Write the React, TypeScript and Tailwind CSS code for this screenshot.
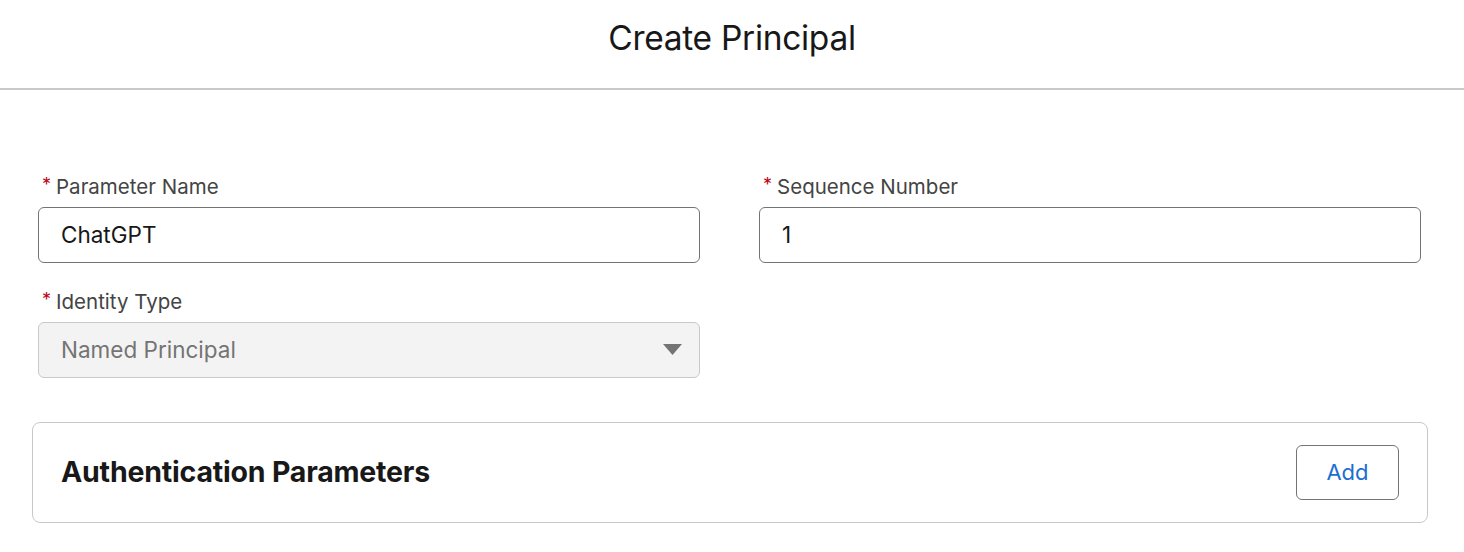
import React from "react";

function Label({ text }: { text: string }) {
  return (
    <div className="flex items-center h-[26px] text-[20.5px] text-[#444444] leading-none">
      <span className="text-[#ba0517] text-[18px] ml-[4px] mr-[5px] mt-[-4px]">*</span>
      <span>{text}</span>
    </div>
  );
}

export default function App() {
  return (
    <div className="w-[1464px] h-[552px] bg-white overflow-hidden" style={{ fontFamily: "Inter, 'Noto Sans', sans-serif" }}>
      <div className="h-[90px] flex items-center justify-center border-b-[2px] border-[#c9c9c9]">
        <h1 className="text-[33.5px] text-[#181818] font-normal tracking-[-0.3px] mt-[-12px]">Create Principal</h1>
      </div>
      <div className="pl-[38px] pr-[43px] pt-[84px]">
        <div className="grid grid-cols-2 gap-x-[59px]">
          <div>
            <Label text="Parameter Name" />
            <div className="mt-[7px] h-[56px] border border-[#747474] rounded-[6px] flex items-center pl-[22px] text-[22.5px] text-[#181818]">
              ChatGPT
            </div>
          </div>
          <div>
            <Label text="Sequence Number" />
            <div className="mt-[7px] h-[56px] border border-[#747474] rounded-[6px] flex items-center pl-[22px] text-[22.5px] text-[#181818]">
              1
            </div>
          </div>
          <div className="mt-[26px]">
            <Label text="Identity Type" />
            <div className="mt-[7px] h-[56px] border border-[#c9c9c9] bg-[#f3f3f3] rounded-[6px] flex items-center justify-between pl-[22px] pr-[17px] text-[22.5px] text-[#747474]">
              <span>Named Principal</span>
              <svg width="19" height="12" viewBox="0 0 19 12">
                <path d="M0 0 L19 0 L9.5 11 Z" fill="#747474" />
              </svg>
            </div>
          </div>
        </div>
      </div>
      <div className="mt-[44px] ml-[32px] w-[1396px] h-[101px] border border-[#c9c9c9] rounded-[8px] flex items-center justify-between pl-[28px] pr-[28px]">
        <h2 className="text-[28.5px] font-bold text-[#181818] tracking-[-0.2px]">Authentication Parameters</h2>
        <button className="w-[103px] h-[55px] border border-[#747474] rounded-[6px] text-[22px] text-[#1b6fd1] bg-white">
          Add
        </button>
      </div>
    </div>
  );
}
